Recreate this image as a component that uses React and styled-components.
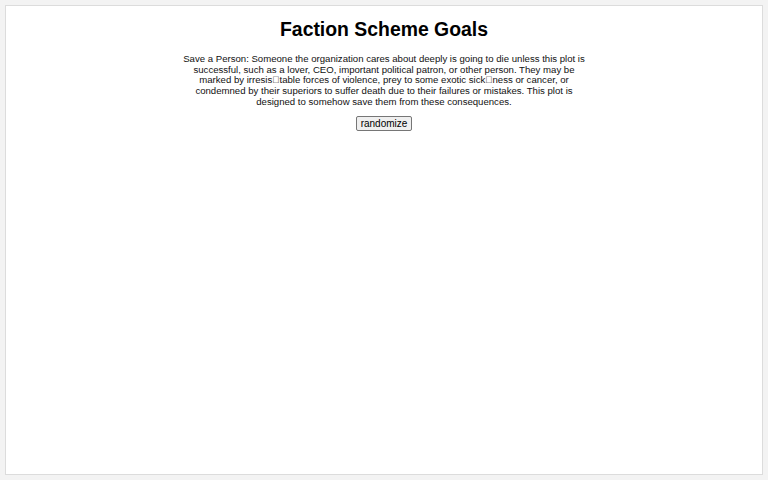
import React, { useState } from 'react';
import styled, { createGlobalStyle } from 'styled-components';

const GlobalStyle = createGlobalStyle`
  html, body {
    margin: 0;
    padding: 0;
    background: #f3f3f3;
  }
  body {
    font-family: "Liberation Sans", Arial, sans-serif;
  }
`;

const Card = styled.div`
  box-sizing: border-box;
  margin: 5px;
  height: 470px;
  background: #fff;
  border: 1px solid #dcdcdc;
  display: flex;
  flex-direction: column;
  align-items: center;
  padding-top: 12px;
`;

const Title = styled.h1`
  margin: 0;
  font-size: 19.4px;
  font-weight: bold;
  color: #000;
`;

const Goal = styled.p`
  width: 406px;
  margin: 13px 0 0;
  font-size: 9.6px;
  line-height: 10.7px;
  text-align: center;
  color: #111;
`;

const Button = styled.button`
  margin-top: 8px;
  font-family: "Liberation Sans", Arial, sans-serif;
  font-size: 10px;
  padding: 1px 4px;
  color: #000;
  background: #efefef;
  border: 1px solid #767676;
  border-radius: 2px;
`;

const goals = [
  'Save a Person: Someone the organization cares about deeply is going to die unless this plot is successful, such as a lover, CEO, important political patron, or other person. They may be marked by irresis\uE000table forces of violence, prey to some exotic sick\uE000ness or cancer, or condemned by their superiors to suffer death due to their failures or mistakes. This plot is designed to somehow save them from these consequences.',
];

export default function App() {
  const [goal, setGoal] = useState(goals[0]);

  const randomize = () => {
    setGoal(goals[Math.floor(Math.random() * goals.length)]);
  };

  return (
    <>
      <GlobalStyle />
      <Card>
        <Title>Faction Scheme Goals</Title>
        <Goal>{goal}</Goal>
        <Button onClick={randomize}>randomize</Button>
      </Card>
    </>
  );
}
